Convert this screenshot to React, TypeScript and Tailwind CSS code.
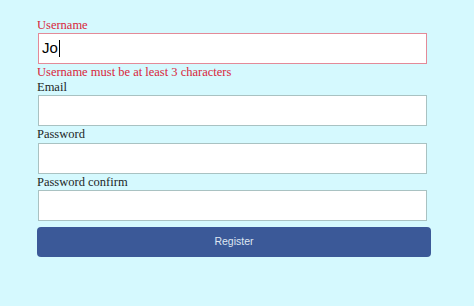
import React from "react";

export default function App() {
  return (
    <div className="w-[474px] h-[306px] bg-[#d5f9fe] pt-[17px] font-['Liberation_Serif',serif]">
      <div className="ml-[37px] w-[394px] flex flex-col">
        <label className="text-[12.5px] leading-[16px] text-[#d9253b]">Username</label>
        <div className="ml-[1px] w-[389px] h-[31px] border border-[#e38a98] bg-white flex items-center pl-[3px] font-['Liberation_Sans',Arial,sans-serif] text-[15px] text-black">
          <span>Jo</span>
          <span className="w-px h-[17px] bg-black ml-px" />
        </div>
        <div className="text-[12.5px] leading-[16px] text-[#d9253b]">Username must be at least 3 characters</div>
        <label className="text-[12.5px] leading-[15px] text-[#1c2626]">Email</label>
        <input className="ml-[1px] w-[389px] h-[31px] border border-[#a9c2c2] bg-white outline-none" />
        <label className="text-[12.5px] leading-[17px] text-[#1c2626]">Password</label>
        <input type="password" className="ml-[1px] w-[389px] h-[31px] border border-[#a9c2c2] bg-white outline-none" />
        <label className="text-[12.5px] leading-[16px] text-[#1c2626]">Password confirm</label>
        <input type="password" className="ml-[1px] w-[389px] h-[31px] border border-[#a9c2c2] bg-white outline-none" />
        <button className="mt-[6px] w-[394px] h-[30px] rounded-[4px] bg-[#3b5998] text-[#dfe7f2] text-[10.5px] font-['Liberation_Sans',Arial,sans-serif]">Register</button>
      </div>
    </div>
  );
}
